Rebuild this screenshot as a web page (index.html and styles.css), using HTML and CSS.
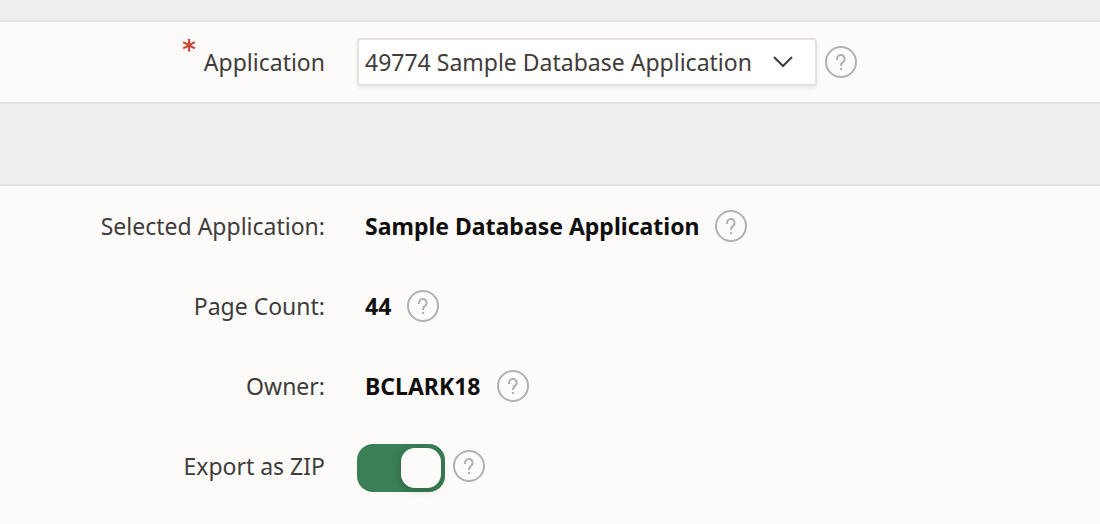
FILE: index.html
```
<!doctype html>
<html lang="en">
<head>
<meta charset="utf-8">
<meta name="viewport" content="width=device-width, initial-scale=1">
<title>Export Application</title>
<link rel="stylesheet" href="styles.css">
</head>
<body>
<svg class="sprite" aria-hidden="true">
  <symbol id="help" viewBox="0 0 32 32">
    <circle cx="16" cy="16" r="15"/>
    <path d="M12 14v-1a4 4 0 0 1 4-4h1a4 4 0 0 1 1 7q-2 1-2 4M16 22v2"/>
  </symbol>
</svg>

<form>
  <section class="region">
    <div class="field">
      <label class="label" for="app"><span class="required">*</span>Application</label>
      <div class="control">
        <div class="select">
          <select id="app" required>
            <option>49774 Sample Database Application</option>
          </select>
          <svg class="chevron" viewBox="0 0 20 12" aria-hidden="true"><path d="M1 1l9 9 9-9"/></svg>
        </div>
        <button class="help" type="button" aria-label="Help: Application"><svg><use href="#help"/></svg></button>
      </div>
    </div>
  </section>

  <section class="region">
    <div class="field">
      <label class="label" for="name">Selected Application:</label>
      <div class="control">
        <output class="value" id="name">Sample Database Application</output>
        <button class="help" type="button" aria-label="Help: Selected Application"><svg><use href="#help"/></svg></button>
      </div>
    </div>
    <div class="field">
      <label class="label" for="pages">Page Count:</label>
      <div class="control">
        <output class="value" id="pages">44</output>
        <button class="help" type="button" aria-label="Help: Page Count"><svg><use href="#help"/></svg></button>
      </div>
    </div>
    <div class="field">
      <label class="label" for="owner">Owner:</label>
      <div class="control">
        <output class="value" id="owner">BCLARK18</output>
        <button class="help" type="button" aria-label="Help: Owner"><svg><use href="#help"/></svg></button>
      </div>
    </div>
    <div class="field">
      <label class="label" for="zip">Export as ZIP</label>
      <div class="control">
        <input class="switch" type="checkbox" role="switch" id="zip" checked>
        <button class="help" type="button" aria-label="Help: Export as ZIP"><svg><use href="#help"/></svg></button>
      </div>
    </div>
  </section>
</form>
</body>
</html>
```

FILE: styles.css
```
* {
    box-sizing: border-box;
}
body {
    margin: 0;
    background: #efeeed;
    color: #3f3c3a;
    font-family: "Noto Sans", "Open Sans", sans-serif;
    font-size: 23px;
    line-height: 32px;
}
form {
    display: flex;
    flex-direction: column;
    gap: 80px;
    min-height: 100vh;
    padding-top: 20px;
}
.region {
    background: #fcfbfa;
    border-top: 2px solid #e4e3e2;
    border-bottom: 2px solid #e4e3e2;
}
.region:last-child {
    flex: 1;
    border-bottom: 0;
}
.field {
    display: grid;
    grid-template-columns: 31% 1fr;
    align-items: center;
    min-height: 80px;
}
.label {
    display: flex;
    justify-content: flex-end;
    padding-right: 16px;
}
.required {
    margin-right: 8px;
    color: #c74634;
    font-family: "DejaVu Sans", sans-serif;
    font-size: 26px;
    font-weight: bold;
    line-height: 8px;
}
.control {
    display: flex;
    align-items: center;
    gap: 8px;
    padding-left: 16px;
}
.value {
    padding: 0 8px;
    color: #100f0e;
    font-weight: bold;
}

/* select list */
.select {
    display: grid;
    align-items: center;
}
.select select,
.chevron {
    grid-area: 1 / 1;
}
.select select {
    height: 48px;
    padding: 0 63px 0 6px;
    border: 2px solid #e5e3e1;
    border-radius: 4px;
    background: #fff;
    box-shadow: 0 2px 4px rgba(0, 0, 0, 0.08);
    color: inherit;
    font: inherit;
    appearance: none;
}
.chevron {
    justify-self: end;
    width: 20px;
    height: 12px;
    margin-right: 24px;
    fill: none;
    stroke: #3f3c3a;
    stroke-width: 2;
    pointer-events: none;
}

/* help buttons */
.sprite {
    display: none;
}
.help {
    width: 32px;
    height: 32px;
    padding: 0;
    border: 0;
    background: none;
    cursor: pointer;
}
.help svg {
    display: block;
    width: 32px;
    height: 32px;
    fill: none;
    stroke: #b3b1b0;
    stroke-width: 2;
}

/* switch */
.switch {
    display: flex;
    justify-content: flex-end;
    width: 88px;
    height: 48px;
    margin: 4px 0 0;
    padding: 4px;
    border-radius: 16px;
    background: #3a7f55;
    appearance: none;
    cursor: pointer;
}
.switch:not(:checked) {
    justify-content: flex-start;
    background: #8b8580;
}
.switch::before {
    content: "";
    width: 40px;
    border-radius: 14px;
    background: #fcfbfa;
    box-shadow: 0 2px 8px rgba(0, 0, 0, 0.2);
}
```
